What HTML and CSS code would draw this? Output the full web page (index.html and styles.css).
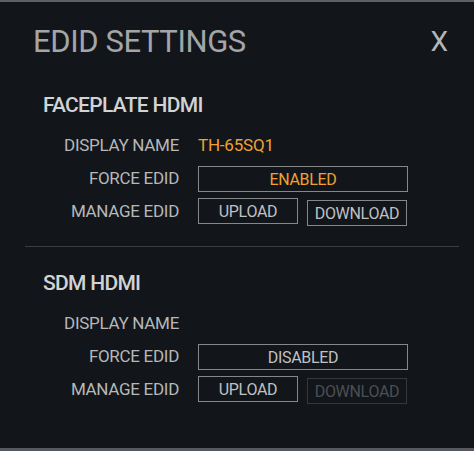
FILE: index.html
```html
<!DOCTYPE html>
<html>
<head>
<meta charset="utf-8">
<link rel="stylesheet" href="styles.css">
</head>
<body>
<div class="dialog">
  <div class="header">
    <div class="title">EDID SETTINGS</div>
    <div class="close">X</div>
  </div>
  <section class="section first">
    <div class="heading">FACEPLATE HDMI</div>
    <div class="grid">
      <div class="label">DISPLAY NAME</div>
      <div class="value">TH-65SQ1</div>
      <div class="label">FORCE EDID</div>
      <div class="ctrl"><div class="btn wide active">ENABLED</div></div>
      <div class="label">MANAGE EDID</div>
      <div class="ctrl pair"><div class="btn">UPLOAD</div><div class="btn low">DOWNLOAD</div></div>
    </div>
  </section>
  <div class="divider"></div>
  <section class="section">
    <div class="heading">SDM HDMI</div>
    <div class="grid">
      <div class="label">DISPLAY NAME</div>
      <div class="value"></div>
      <div class="label">FORCE EDID</div>
      <div class="ctrl"><div class="btn wide">DISABLED</div></div>
      <div class="label">MANAGE EDID</div>
      <div class="ctrl pair"><div class="btn">UPLOAD</div><div class="btn low disabled">DOWNLOAD</div></div>
    </div>
  </section>
</div>
</body>
</html>
```

FILE: styles.css
```css
html, body {
  margin: 0;
  padding: 0;
}
body {
  background: #12161b;
  font-family: Roboto, "Liberation Sans", sans-serif;
  height: 451px;
  box-sizing: border-box;
  border-top: 2px solid #5d6166;
  border-bottom: 3px solid #55595e;
  overflow: hidden;
}
.dialog {
  padding: 22px 26px 0 33px;
}
.header {
  display: flex;
  justify-content: space-between;
  align-items: flex-start;
}
.title {
  font-size: 31px;
  line-height: 36px;
  color: #a3a5a7;
  letter-spacing: -0.4px;
}
.close {
  font-size: 28px;
  line-height: 34px;
  color: #b4b6b8;
  margin-top: 1px;
}
.section {
  padding-left: 10px;
}
.section.first {
  margin-top: 32px;
}
.heading {
  font-size: 21px;
  font-weight: 500;
  line-height: 26px;
  color: #d2d3d4;
  letter-spacing: -0.7px;
  margin-bottom: 11px;
}
.grid {
  display: grid;
  grid-template-columns: 136px 210px;
  grid-auto-rows: 33px;
  column-gap: 19px;
  align-items: center;
}
.label {
  text-align: right;
  font-size: 17px;
  line-height: 33px;
  color: #b6b8ba;
  letter-spacing: -0.3px;
}
.value {
  font-size: 17px;
  line-height: 33px;
  color: #eea232;
  letter-spacing: -0.2px;
}
.ctrl {
  display: flex;
  align-items: flex-start;
  gap: 9px;
}
.btn {
  box-sizing: border-box;
  width: 100px;
  height: 26px;
  border: 1px solid #85888b;
  color: #bfc1c3;
  font-size: 16px;
  line-height: 25px;
  text-align: center;
  letter-spacing: -0.3px;
}
.btn.wide {
  width: 210px;
}
.btn.active {
  color: #eea232;
}
.btn.low {
  margin-top: 2px;
}
.btn.disabled {
  border-color: #34383c;
  color: #4b4f53;
}
.divider {
  height: 1px;
  background: #3a3e42;
  margin: 18px -11px 23px -8px;
}
```
